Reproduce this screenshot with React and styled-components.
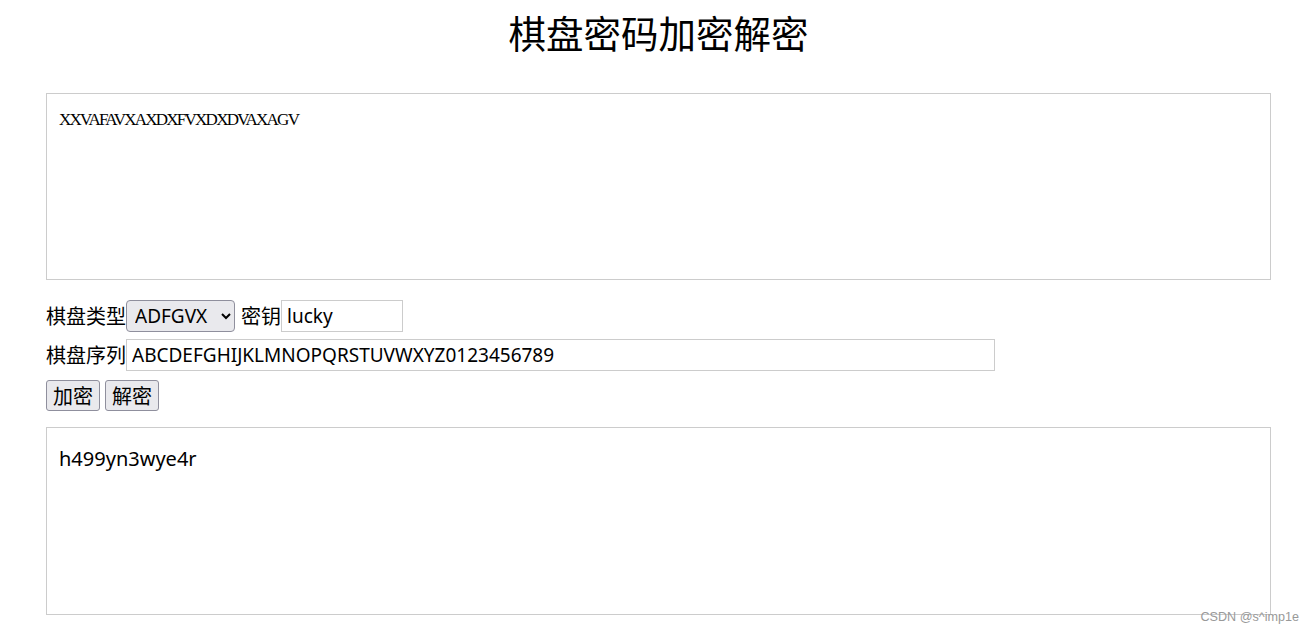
import React, { useState } from "react";
import styled, { createGlobalStyle } from "styled-components";

const GlobalStyle = createGlobalStyle`
  body {
    margin: 0;
    background: #fff;
    color: #000;
    font-family: "Noto Sans", "Noto Sans CJK SC", sans-serif;
  }
`;

const Page = styled.div`
  position: relative;
  width: 1314px;
  height: 634px;
  padding: 6px 43px 0 46px;
  box-sizing: border-box;
  overflow: hidden;
`;

const Title = styled.h1`
  margin: 0 0 35px;
  font-family: "Noto Sans CJK SC", sans-serif;
  font-size: 37.5px;
  font-weight: 400;
  line-height: 52px;
  text-align: center;
`;

const TextBox = styled.textarea`
  display: block;
  width: 100%;
  height: ${(p) => p.$height}px;
  margin: 0;
  padding: ${(p) => (p.$serif ? "15px 12px" : "17px 12px")};
  box-sizing: border-box;
  border: 1px solid #ccc;
  outline: none;
  resize: none;
  font-family: ${(p) =>
    p.$serif ? '"Liberation Serif", serif' : '"Noto Sans", "Noto Sans CJK SC", sans-serif'};
  font-size: ${(p) => (p.$serif ? "17px" : "20px")};
  letter-spacing: ${(p) => (p.$serif ? "-1.75px" : "normal")};
  line-height: ${(p) => (p.$serif ? "22px" : "28px")};
  color: #000;
`;

const Form = styled.div`
  display: flex;
  flex-direction: column;
  gap: 7px;
  margin: 20px 0 16px;
`;

const Row = styled.div`
  display: flex;
  align-items: center;
  height: 32px;
`;

const Label = styled.span`
  font-family: "Noto Sans CJK SC", sans-serif;
  font-size: 20px;
  line-height: 32px;
  margin-left: ${(p) => p.$gap || 0}px;
`;

const Select = styled.select`
  width: 109px;
  height: 32px;
  padding: 0 4px;
  box-sizing: border-box;
  border: 1px solid #8f8f9d;
  border-radius: 4px;
  background: #e9e9ed;
  font-family: "Noto Sans", sans-serif;
  font-size: 19px;
  color: #000;
`;

const Input = styled.input`
  width: ${(p) => p.$width}px;
  height: 32px;
  padding: 0 5px;
  box-sizing: border-box;
  border: 1px solid #ccc;
  outline: none;
  font-family: "Noto Sans", sans-serif;
  font-size: 19px;
  color: #000;
`;

const Buttons = styled.div`
  display: flex;
  gap: 5px;
  height: 31px;
  margin-top: 2px;
`;

const Button = styled.button`
  height: 31px;
  padding: 0 6px;
  border: 1px solid #8f8f9d;
  border-radius: 3px;
  background: #e9e9ed;
  font-family: "Noto Sans CJK SC", sans-serif;
  font-size: 20px;
  line-height: 1;
  color: #000;
  cursor: pointer;
`;

const Watermark = styled.div`
  position: absolute;
  right: 15px;
  bottom: 10px;
  font-family: "Liberation Sans", sans-serif;
  font-size: 12.6px;
  color: #999;
`;

export default function App() {
  const [plain, setPlain] = useState("XXVAFAVXAXDXFVXDXDVAXAGV");
  const [type, setType] = useState("ADFGVX");
  const [key, setKey] = useState("lucky");
  const [square, setSquare] = useState("ABCDEFGHIJKLMNOPQRSTUVWXYZ0123456789");
  const [result, setResult] = useState("h499yn3wye4r");

  return (
    <>
      <GlobalStyle />
      <Page>
        <Title>棋盘密码加密解密</Title>
        <TextBox
          $serif
          $height={187}
          value={plain}
          onChange={(e) => setPlain(e.target.value)}
        />
        <Form>
          <Row>
            <Label>棋盘类型</Label>
            <Select value={type} onChange={(e) => setType(e.target.value)}>
              <option value="ADFGX">ADFGX</option>
              <option value="ADFGVX">ADFGVX</option>
            </Select>
            <Label $gap={6}>密钥</Label>
            <Input $width={122} value={key} onChange={(e) => setKey(e.target.value)} />
          </Row>
          <Row>
            <Label>棋盘序列</Label>
            <Input
              $width={869}
              value={square}
              onChange={(e) => setSquare(e.target.value)}
            />
          </Row>
          <Buttons>
            <Button>加密</Button>
            <Button>解密</Button>
          </Buttons>
        </Form>
        <TextBox
          $height={188}
          value={result}
          onChange={(e) => setResult(e.target.value)}
        />
        <Watermark>CSDN @s^imp1e</Watermark>
      </Page>
    </>
  );
}
